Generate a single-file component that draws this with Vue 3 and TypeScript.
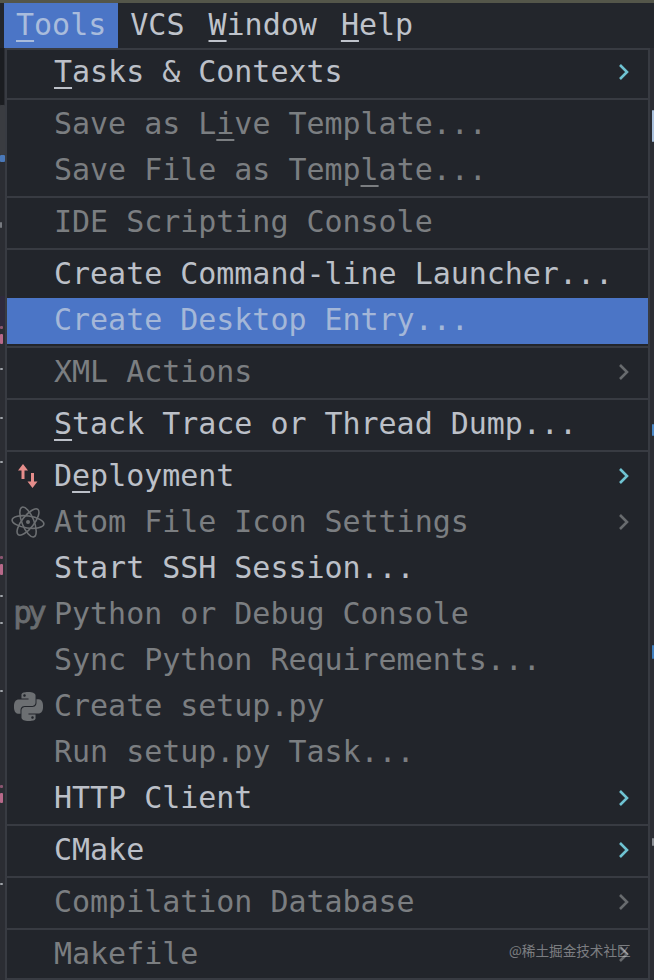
<script setup lang="ts">
type Row = {
  label: string
  mn?: number
  off?: boolean
  active?: boolean
  arrow?: boolean
  icon?: 'deploy' | 'atom' | 'py' | 'python'
  sep?: boolean
}

const bar = [
  { label: 'Tools', mn: 0, open: true },
  { label: 'VCS', mn: -1, open: false },
  { label: 'Window', mn: 0, open: false },
  { label: 'Help', mn: 0, open: false },
]

const rows: Row[] = [
  { label: 'Tasks & Contexts', mn: 0, arrow: true, sep: true },
  { label: 'Save as Live Template...', mn: 9, off: true },
  { label: 'Save File as Template...', mn: 17, off: true, sep: true },
  { label: 'IDE Scripting Console', off: true, sep: true },
  { label: 'Create Command-line Launcher...' },
  { label: 'Create Desktop Entry...', active: true, sep: true },
  { label: 'XML Actions', off: true, arrow: true, sep: true },
  { label: 'Stack Trace or Thread Dump...', mn: 0, sep: true },
  { label: 'Deployment', mn: 1, arrow: true, icon: 'deploy' },
  { label: 'Atom File Icon Settings', off: true, arrow: true, icon: 'atom' },
  { label: 'Start SSH Session...' },
  { label: 'Python or Debug Console', off: true, icon: 'py' },
  { label: 'Sync Python Requirements...', off: true },
  { label: 'Create setup.py', off: true, icon: 'python' },
  { label: 'Run setup.py Task...', off: true },
  { label: 'HTTP Client', arrow: true, sep: true },
  { label: 'CMake', arrow: true, sep: true },
  { label: 'Compilation Database', off: true, arrow: true, sep: true },
  { label: 'Makefile', off: true, arrow: true },
]

function parts(label: string, mn?: number): [string, string, string] {
  if (mn === undefined || mn < 0) return [label, '', '']
  return [label.slice(0, mn), label.charAt(mn), label.slice(mn + 1)]
}

const marks = [
  { x: 0, y: 3, w: 4, h: 102, c: '#1b1d21' },
  { x: 0, y: 105, w: 5, h: 50, c: '#3a3c41' },
  { x: 0, y: 155, w: 5, h: 7, c: '#4a78b8' },
  { x: 0, y: 222, w: 2, h: 6, c: '#777a80' },
  { x: 0, y: 296, w: 5, h: 30, c: '#2f2a3c' },
  { x: 0, y: 326, w: 3, h: 3, c: '#8a5570' },
  { x: 0, y: 334, w: 3, h: 10, c: '#b8698a' },
  { x: 0, y: 368, w: 3, h: 2, c: '#a0a4aa' },
  { x: 0, y: 417, w: 3, h: 2, c: '#a0a4aa' },
  { x: 0, y: 461, w: 3, h: 2, c: '#a0a4aa' },
  { x: 0, y: 556, w: 3, h: 3, c: '#8a5570' },
  { x: 0, y: 564, w: 3, h: 11, c: '#b8698a' },
  { x: 0, y: 595, w: 3, h: 2, c: '#a0a4aa' },
  { x: 0, y: 622, w: 3, h: 2, c: '#a0a4aa' },
  { x: 0, y: 690, w: 3, h: 2, c: '#a0a4aa' },
  { x: 0, y: 785, w: 3, h: 3, c: '#8a5570' },
  { x: 0, y: 793, w: 3, h: 10, c: '#b8698a' },
  { x: 0, y: 883, w: 3, h: 2, c: '#a0a4aa' },
  { x: 652, y: 110, w: 2, h: 32, c: '#a9c0dc' },
  { x: 652, y: 424, w: 2, h: 12, c: '#4a88c8' },
  { x: 652, y: 645, w: 2, h: 14, c: '#3f7fc0' },
  { x: 652, y: 838, w: 2, h: 8, c: '#8a8e94' },
]

const pythonPath =
  'M14.25.18l.9.2.73.26.59.3.45.32.34.34.25.34.16.33.1.3.04.26.02.2-.01.13V8.5l-.05.63-.13.55-.21.46-.26.38-.3.31-.33.25-.35.19-.35.14-.33.1-.3.07-.26.04-.21.02H8.77l-.69.05-.59.14-.5.22-.41.27-.33.32-.27.35-.2.36-.15.37-.1.35-.07.32-.04.27-.02.21v3.06H3.17l-.21-.03-.28-.07-.32-.12-.35-.18-.36-.26-.36-.36-.35-.46-.32-.59-.28-.73-.21-.88-.14-1.05-.05-1.23.06-1.22.16-1.04.24-.87.32-.71.36-.57.4-.44.42-.33.42-.24.4-.16.36-.1.32-.05.24-.01h.16l.06.01h8.16v-.83H6.18l-.01-2.75-.02-.37.05-.34.11-.31.17-.28.25-.26.31-.23.38-.2.44-.18.51-.15.58-.12.64-.1.71-.06.77-.04.84-.02 1.27.05zm-6.3 1.98l-.23.33-.08.41.08.41.23.34.33.22.41.09.41-.09.33-.22.23-.34.08-.41-.08-.41-.23-.33-.33-.22-.41-.09-.41.09zm13.09 3.95l.28.06.32.12.35.18.36.27.36.35.35.47.32.59.28.73.21.88.14 1.04.05 1.23-.06 1.23-.16 1.04-.24.86-.32.71-.36.57-.4.45-.42.33-.42.24-.4.16-.36.09-.32.05-.24.02-.16-.01h-8.22v.82h5.84l.01 2.76.02.36-.05.34-.11.31-.17.29-.25.25-.31.24-.38.2-.44.17-.51.15-.58.13-.64.09-.71.07-.77.04-.84.01-1.27-.04-1.07-.14-.9-.2-.73-.25-.59-.3-.45-.33-.34-.34-.25-.34-.16-.33-.1-.3-.04-.25-.02-.2.01-.13v-5.34l.05-.64.13-.54.21-.46.26-.38.3-.32.33-.24.35-.2.35-.14.33-.1.3-.06.26-.04.21-.02.13-.01h5.84l.69-.05.59-.14.5-.21.41-.28.33-.32.27-.35.2-.36.15-.36.1-.35.07-.32.04-.28.02-.21V6.07h2.09l.14.01zm-6.47 14.25l-.23.33-.08.41.08.41.23.33.33.23.41.08.41-.08.33-.23.23-.33.08-.41-.08-.41-.23-.33-.33-.23-.41-.08-.41.08z'
</script>

<template>
  <div class="screen">
    <i
      v-for="(m, i) in marks"
      :key="i"
      class="mark"
      :style="{ left: m.x + 'px', top: m.y + 'px', width: m.w + 'px', height: m.h + 'px', background: m.c }"
    ></i>
    <div class="strip"></div>
    <nav class="bar">
      <div v-for="b in bar" :key="b.label" class="bar-item" :class="{ open: b.open }">
        <span>{{ parts(b.label, b.mn)[0] }}</span><span class="mn">{{ parts(b.label, b.mn)[1] }}</span><span>{{ parts(b.label, b.mn)[2] }}</span>
      </div>
    </nav>
    <div class="menu">
      <template v-for="r in rows" :key="r.label">
        <div class="row" :class="{ off: r.off, active: r.active }">
          <div class="slot">
            <svg v-if="r.icon === 'deploy'" width="20" height="24" viewBox="0 0 20 24" fill="none" stroke="#e58d8b" stroke-width="3">
              <path d="M5 15V4M14.5 9v11" />
              <path d="M5 0l5 6.5H0zM14.5 24l-5-6.5h10z" fill="#e58d8b" stroke="none" />
            </svg>
            <svg v-else-if="r.icon === 'atom'" width="34" height="32" viewBox="0 0 34 32" fill="none" stroke="#6c6f72" stroke-width="1.6">
              <ellipse cx="17" cy="16" rx="16" ry="6" transform="rotate(8 17 16)" />
              <ellipse cx="17" cy="16" rx="16" ry="6" transform="rotate(68 17 16)" />
              <ellipse cx="17" cy="16" rx="16" ry="6" transform="rotate(-52 17 16)" />
              <circle cx="17" cy="16" r="2" fill="#6c6f72" stroke="none" />
            </svg>
            <span v-else-if="r.icon === 'py'" class="py">py</span>
            <svg v-else-if="r.icon === 'python'" width="29" height="29" viewBox="0 0 24 24" fill="#6c6f72">
              <path :d="pythonPath" />
            </svg>
          </div>
          <span class="label"><span>{{ parts(r.label, r.mn)[0] }}</span><span class="mn">{{ parts(r.label, r.mn)[1] }}</span><span>{{ parts(r.label, r.mn)[2] }}</span></span>
          <svg v-if="r.arrow" class="chev" width="12" height="18" viewBox="0 0 12 18" fill="none" :stroke="r.off ? '#686b6e' : '#6fc3d2'" stroke-width="2.6">
            <path d="M2 2l7 7-7 7" />
          </svg>
        </div>
        <div v-if="r.sep" class="sep"></div>
      </template>
    </div>
    <div class="mark-text">@稀土掘金技术社区</div>
  </div>
</template>

<style scoped>
.screen {
  position: relative;
  width: 654px;
  height: 980px;
  overflow: hidden;
  background: #2b2d33;
  font-family: "DejaVu Sans Mono", "Liberation Mono", monospace;
  font-size: 30px;
}
.mark {
  position: absolute;
  display: block;
  border-radius: 1px;
}
.strip {
  height: 3px;
  background: #54564a;
}
.bar {
  position: relative;
  display: flex;
  height: 45px;
  padding-left: 4px;
  background: #23262c;
  color: #bfc3cb;
}
.bar-item {
  padding: 0 12px;
  line-height: 43px;
  white-space: pre;
}
.bar-item.open {
  background: #4b75c6;
  color: #a9bcdc;
}
.mn {
  text-decoration: underline;
  text-decoration-thickness: 2px;
  text-underline-offset: 5px;
}
.menu {
  position: relative;
  margin: 0 4px 0 5px;
  border: 2px solid #383b42;
  background: #22252b;
  color: #bcc0c8;
}
.row {
  display: flex;
  align-items: center;
  height: 46px;
  padding-right: 18px;
  white-space: pre;
}
.row.off {
  color: #7b7e81;
}
.row.active {
  background: #4b75c6;
  color: #a4b7d8;
}
.slot {
  flex: none;
  box-sizing: border-box;
  display: flex;
  align-items: center;
  justify-content: center;
  width: 47px;
  height: 46px;
  padding: 0 5px 2px 0;
}
.py {
  color: #6a6d70;
  font-size: 31px;
  letter-spacing: -4px;
  line-height: 30px;
  margin-bottom: 5px;
  -webkit-text-stroke: 0.8px #6a6d70;
}
.label {
  flex: 1;
  min-width: 0;
  padding-bottom: 4px;
  letter-spacing: -0.03px;
}
.chev {
  flex: none;
  margin-bottom: 2px;
}
.sep {
  height: 6px;
  display: flex;
  align-items: center;
}
.sep::before {
  content: "";
  display: block;
  width: 100%;
  height: 2px;
  background: #383b42;
}
.mark-text {
  position: absolute;
  left: 509px;
  top: 940px;
  font-family: "Noto Sans CJK SC", "Liberation Sans", sans-serif;
  font-size: 13.6px;
  line-height: 20px;
  color: rgba(255, 255, 255, 0.42);
  white-space: nowrap;
}
</style>
